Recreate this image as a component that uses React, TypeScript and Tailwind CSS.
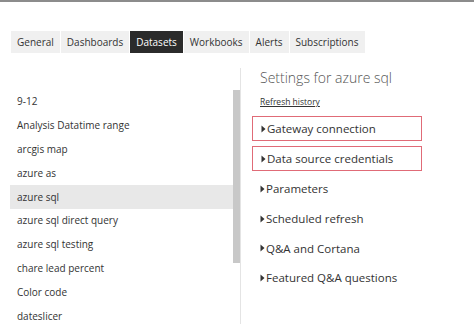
import React from "react";

const tabs = ["General", "Dashboards", "Datasets", "Workbooks", "Alerts", "Subscriptions"];
const items = [
  "9-12",
  "Analysis Datatime range",
  "arcgis map",
  "azure as",
  "azure sql",
  "azure sql direct query",
  "azure sql testing",
  "chare lead percent",
  "Color code",
  "dateslicer",
];
const sections = [
  { label: "Gateway connection", boxed: true },
  { label: "Data source credentials", boxed: true },
  { label: "Parameters", boxed: false },
  { label: "Scheduled refresh", boxed: false },
  { label: "Q&A and Cortana", boxed: false },
  { label: "Featured Q&A questions", boxed: false },
];

function Caret() {
  return (
    <svg width="5" height="8" viewBox="0 0 5 8" className="mr-[1px] shrink-0">
      <path d="M0.5 0.5 L4.5 4 L0.5 7.5 Z" fill="#333" />
    </svg>
  );
}

export default function App() {
  return (
    <div
      className="w-[474px] h-[324px] bg-white overflow-hidden relative"
      style={{ fontFamily: '"Open Sans", "Noto Sans", sans-serif' }}
    >
      <div className="h-[2px] bg-[#8c8c8c]" />
      <div className="flex ml-[11px] mt-[29px] gap-[1px]">
        {tabs.map((t) => (
          <div
            key={t}
            className={
              "h-[22px] px-[6px] flex items-center text-[10px] leading-none " +
              (t === "Datasets" ? "bg-[#2b2b2b] text-white" : "bg-[#f0f0f0] text-[#333]")
            }
          >
            {t}
          </div>
        ))}
      </div>
      <div className="flex mt-[15px]">
        <div className="w-[240px] shrink-0 flex relative">
          <div className="ml-[10px] mt-[22px] w-[223px] flex flex-col">
            {items.map((it) => (
              <div
                key={it}
                className={
                  "h-[23.8px] pl-[7px] flex items-center text-[10px] text-[#333] " +
                  (it === "azure sql" ? "bg-[#e8e8e8]" : "")
                }
              >
                {it}
              </div>
            ))}
          </div>
          <div className="w-[7px] shrink-0 relative">
            <div className="absolute left-0 right-0 top-[22px] h-[173px] bg-[#c8c8c8]" />
          </div>
        </div>
        <div className="flex-1 border-l border-[#e4e4e4] pl-[19px] pt-[0px] h-[260px]">
          <div className="text-[14px] font-light text-[#555] leading-[18px] mt-[1px]">Settings for azure sql</div>
          <div className="mt-[9px] text-[8.5px] text-[#333] underline leading-[12px]">Refresh history</div>
          <div className="mt-[8px] -ml-[8px] flex flex-col">
            {sections.map((s, i) => (
              <div
                key={s.label}
                className={
                  "flex items-center pl-[8px] text-[11.5px] text-[#333] " +
                  (s.boxed
                    ? "h-[25px] w-[170px] border border-[#e06b77] " + (i === 0 ? "mb-[5px]" : "mb-[3px]")
                    : "h-[29.7px]")
                }
              >
                <Caret />
                {s.label}
              </div>
            ))}
          </div>
        </div>
      </div>
    </div>
  );
}
